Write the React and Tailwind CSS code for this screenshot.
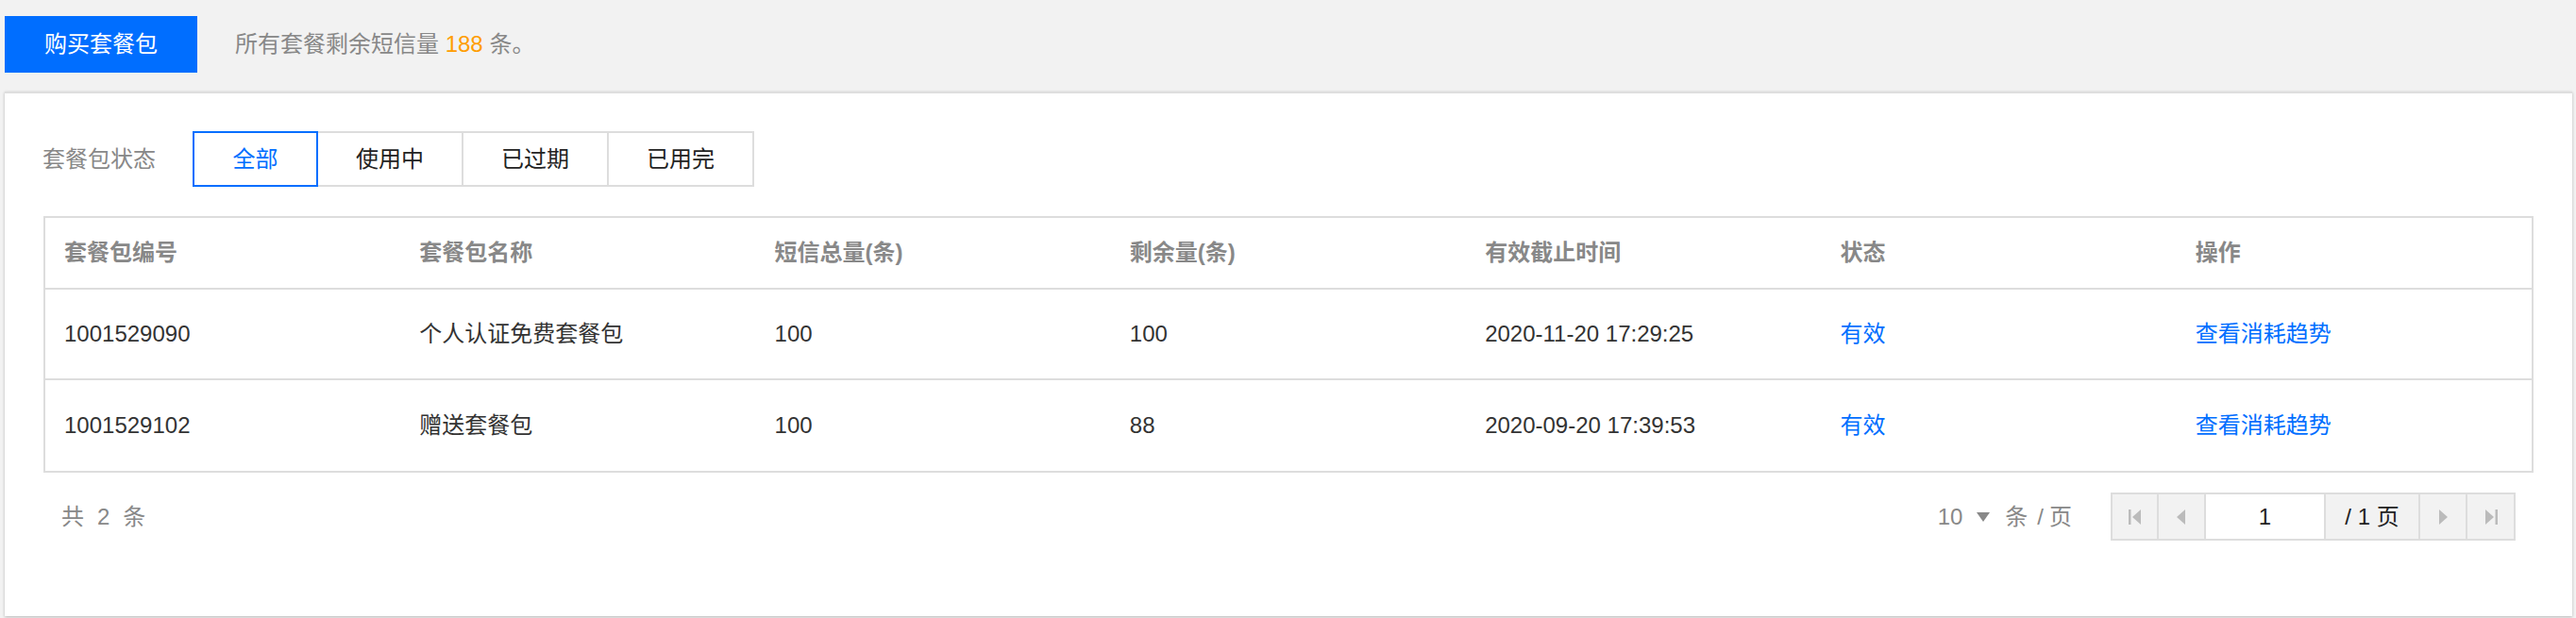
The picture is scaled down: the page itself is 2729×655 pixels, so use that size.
import React from "react";

const FONT = { fontFamily: '"Liberation Sans", "Noto Sans CJK SC", Arial, sans-serif' };

const cols = ["套餐包编号", "套餐包名称", "短信总量(条)", "剩余量(条)", "有效截止时间", "状态", "操作"];
const rows = [
  ["1001529090", "个人认证免费套餐包", "100", "100", "2020-11-20 17:29:25"],
  ["1001529102", "赠送套餐包", "100", "88", "2020-09-20 17:39:53"],
];

function Tri({ dir = "left", bar = false }) {
  return (
    <svg width="14" height="16" viewBox="0 0 14 16" className="block">
      {dir === "left" ? (
        <>
          {bar && <rect x="0" y="0" width="2.5" height="16" fill="#bbbbbb" />}
          <polygon points={bar ? "13,0 13,16 4,8" : "11,0 11,16 2,8"} fill="#bbbbbb" />
        </>
      ) : (
        <>
          <polygon points={bar ? "1,0 1,16 10,8" : "3,0 3,16 12,8"} fill="#bbbbbb" />
          {bar && <rect x="11.5" y="0" width="2.5" height="16" fill="#bbbbbb" />}
        </>
      )}
    </svg>
  );
}

export default function App() {
  return (
    <div className="w-[2729px] h-[655px] bg-[#f2f2f2] overflow-hidden" style={FONT}>
      {/* top bar */}
      <div className="h-[97px] pl-[5px] pt-[17px] flex items-start">
        <div className="flex items-center">
          <button className="w-[204px] h-[60px] bg-[#006eff] text-white text-[24px] leading-none">
            购买套餐包
          </button>
          <div className="ml-[40px] text-[24px] leading-none text-[#888888]">
            所有套餐剩余短信量 <span className="text-[#ff9d00]">188</span> 条。
          </div>
        </div>
      </div>

      {/* card */}
      <div className="ml-[5px] w-[2720px] h-[556px] bg-white border-t-2 border-[#dedede] shadow-[0_1px_3px_rgba(0,0,0,0.25)] pt-[40px] pl-[41px]">
        {/* status filter */}
        <div className="flex items-center">
          <div className="w-[159px] -ml-[1px] text-[24px] leading-none text-[#888888]">套餐包状态</div>
          <div className="flex">
            <div className="relative z-10 w-[133px] h-[59px] border-2 border-[#006eff] text-[#006eff] text-[24px] flex items-center justify-center leading-none">
              全部
            </div>
            {["使用中", "已过期", "已用完"].map((t) => (
              <div
                key={t}
                className="-ml-[2px] w-[156px] h-[59px] border-2 border-[#dddddd] text-[#222222] text-[24px] flex items-center justify-center leading-none"
              >
                {t}
              </div>
            ))}
          </div>
        </div>

        {/* table */}
        <div className="mt-[31px] w-[2638px] border-2 border-[#dddddd]">
          <div className="grid grid-cols-7 h-[76px] border-b-2 border-[#dddddd]">
            {cols.map((c) => (
              <div key={c} className="pl-[20px] flex items-center text-[24px] font-bold text-[#888888] leading-none">
                {c}
              </div>
            ))}
          </div>
          {rows.map((r, i) => (
            <div
              key={r[0]}
              className={`grid grid-cols-7 h-[96px] ${i === 0 ? "border-b-2 border-[#dddddd]" : ""}`}
            >
              {r.map((v, j) => (
                <div key={j} className="pl-[20px] flex items-center text-[24px] text-[#333333] leading-none">
                  {v}
                </div>
              ))}
              <div className="pl-[20px] flex items-center text-[24px] text-[#006eff] leading-none">有效</div>
              <div className="pl-[20px] flex items-center text-[24px] text-[#006eff] leading-none">查看消耗趋势</div>
            </div>
          ))}
        </div>

        {/* footer */}
        <div className="mt-[21px] w-[2638px] h-[51px] flex items-center justify-between pl-[19px] pr-[19px]">
          <div className="flex items-center gap-[14px] text-[24px] text-[#888888] leading-none">
            <span>共</span>
            <span>2</span>
            <span>条</span>
          </div>
          <div className="flex items-center">
            <div className="flex items-center text-[24px] text-[#888888] leading-none">
              <span>10</span>
              <svg width="14" height="10" viewBox="0 0 14 10" className="ml-[15px] mr-[16px]">
                <polygon points="0,0 14,0 7,10" fill="#888888" />
              </svg>
              <span>条</span>
              <span className="ml-[10px] mr-[6px]">/</span>
              <span>页</span>
            </div>
            <div className="ml-[41px] h-[51px] flex border-2 border-[#dddddd]">
              <div className="w-[49px] bg-[#f2f2f2] border-r-2 border-[#dddddd] flex items-center justify-center">
                <Tri dir="left" bar />
              </div>
              <div className="w-[50px] bg-[#f2f2f2] border-r-2 border-[#dddddd] flex items-center justify-center">
                <Tri dir="left" />
              </div>
              <div className="w-[127px] bg-white border-r-2 border-[#dddddd] flex items-center justify-center text-[24px] text-[#222222] leading-none">
                1
              </div>
              <div className="w-[100px] bg-[#f2f2f2] border-r-2 border-[#dddddd] flex items-center justify-center text-[24px] text-[#222222] leading-none">
                / 1 页
              </div>
              <div className="w-[50px] bg-[#f2f2f2] border-r-2 border-[#dddddd] flex items-center justify-center">
                <Tri dir="right" />
              </div>
              <div className="w-[49px] bg-[#f2f2f2] flex items-center justify-center">
                <Tri dir="right" bar />
              </div>
            </div>
          </div>
        </div>
      </div>
    </div>
  );
}
